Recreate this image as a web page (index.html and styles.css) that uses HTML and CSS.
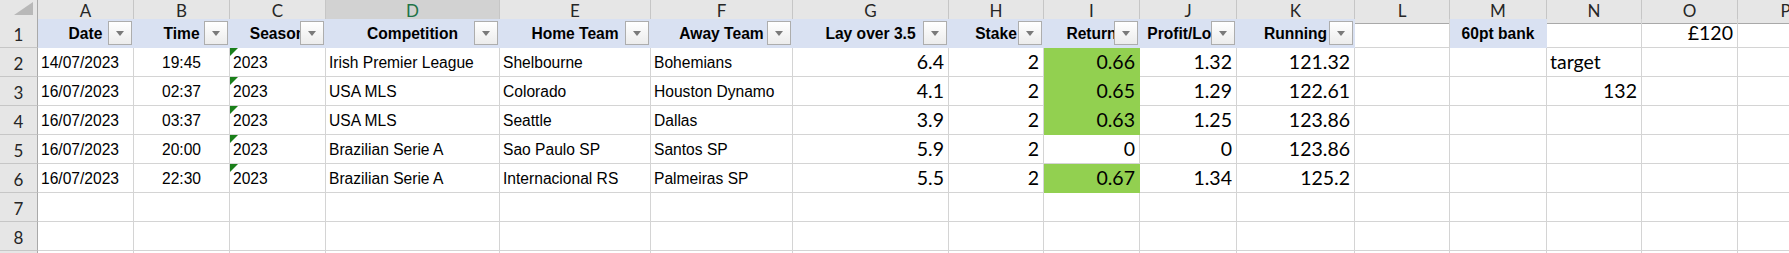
FILE: index.html
```html
<!DOCTYPE html>
<html lang="en">
<head>
    <meta charset="UTF-8">
    <meta name="viewport" content="width=device-width, initial-scale=1.0">
    <title>Lay over 3.5 tracker</title>
    <link rel="stylesheet" href="styles.css">
</head>
<body>
    <div class="sheet">
        <!-- column letters -->
        <div class="row col-heads">
            <div class="corner">
                <svg width="37" height="18" viewBox="0 0 37 18"><polygon points="14,15 33,15 33,2" fill="#b8b8b8"/></svg>
            </div>
            <div class="ch">A</div>
            <div class="ch">B</div>
            <div class="ch">C</div>
            <div class="ch active">D</div>
            <div class="ch">E</div>
            <div class="ch">F</div>
            <div class="ch">G</div>
            <div class="ch">H</div>
            <div class="ch">I</div>
            <div class="ch">J</div>
            <div class="ch">K</div>
            <div class="ch">L</div>
            <div class="ch">M</div>
            <div class="ch">N</div>
            <div class="ch">O</div>
            <div class="ch">P</div>
        </div>

        <!-- table header -->
        <div class="row">
            <div class="rh">1</div>
            <div class="c hd">Date<span class="filter"></span></div>
            <div class="c hd">Time<span class="filter"></span></div>
            <div class="c hd">Season<span class="filter"></span></div>
            <div class="c hd">Competition<span class="filter"></span></div>
            <div class="c hd">Home Team<span class="filter"></span></div>
            <div class="c hd">Away Team<span class="filter"></span></div>
            <div class="c hd">Lay over 3.5<span class="filter"></span></div>
            <div class="c hd">Stake<span class="filter"></span></div>
            <div class="c hd">Return<span class="filter"></span></div>
            <div class="c hd">Profit/Loss<span class="filter"></span></div>
            <div class="c hd">Running<span class="filter"></span></div>
            <div class="c"></div>
            <div class="c hd">60pt bank</div>
            <div class="c"></div>
            <div class="c num">£120</div>
            <div class="c"></div>
        </div>

        <div class="row">
            <div class="rh">2</div>
            <div class="c">14/07/2023</div>
            <div class="c mid">19:45</div>
            <div class="c flag">2023</div>
            <div class="c">Irish Premier League</div>
            <div class="c">Shelbourne</div>
            <div class="c">Bohemians</div>
            <div class="c num">6.4</div>
            <div class="c num">2</div>
            <div class="c num won">0.66</div>
            <div class="c num">1.32</div>
            <div class="c num">121.32</div>
            <div class="c"></div>
            <div class="c"></div>
            <div class="c note">target</div>
            <div class="c"></div>
            <div class="c"></div>
        </div>

        <div class="row">
            <div class="rh">3</div>
            <div class="c">16/07/2023</div>
            <div class="c mid">02:37</div>
            <div class="c flag">2023</div>
            <div class="c">USA MLS</div>
            <div class="c">Colorado</div>
            <div class="c">Houston Dynamo</div>
            <div class="c num">4.1</div>
            <div class="c num">2</div>
            <div class="c num won">0.65</div>
            <div class="c num">1.29</div>
            <div class="c num">122.61</div>
            <div class="c"></div>
            <div class="c"></div>
            <div class="c num">132</div>
            <div class="c"></div>
            <div class="c"></div>
        </div>

        <div class="row">
            <div class="rh">4</div>
            <div class="c">16/07/2023</div>
            <div class="c mid">03:37</div>
            <div class="c flag">2023</div>
            <div class="c">USA MLS</div>
            <div class="c">Seattle</div>
            <div class="c">Dallas</div>
            <div class="c num">3.9</div>
            <div class="c num">2</div>
            <div class="c num won">0.63</div>
            <div class="c num">1.25</div>
            <div class="c num">123.86</div>
            <div class="c"></div>
            <div class="c"></div>
            <div class="c"></div>
            <div class="c"></div>
            <div class="c"></div>
        </div>

        <div class="row">
            <div class="rh">5</div>
            <div class="c">16/07/2023</div>
            <div class="c mid">20:00</div>
            <div class="c flag">2023</div>
            <div class="c">Brazilian Serie A</div>
            <div class="c">Sao Paulo SP</div>
            <div class="c">Santos SP</div>
            <div class="c num">5.9</div>
            <div class="c num">2</div>
            <div class="c num">0</div>
            <div class="c num">0</div>
            <div class="c num">123.86</div>
            <div class="c"></div>
            <div class="c"></div>
            <div class="c"></div>
            <div class="c"></div>
            <div class="c"></div>
        </div>

        <div class="row">
            <div class="rh">6</div>
            <div class="c">16/07/2023</div>
            <div class="c mid">22:30</div>
            <div class="c flag">2023</div>
            <div class="c">Brazilian Serie A</div>
            <div class="c">Internacional RS</div>
            <div class="c">Palmeiras SP</div>
            <div class="c num">5.5</div>
            <div class="c num">2</div>
            <div class="c num won">0.67</div>
            <div class="c num">1.34</div>
            <div class="c num">125.2</div>
            <div class="c"></div>
            <div class="c"></div>
            <div class="c"></div>
            <div class="c"></div>
            <div class="c"></div>
        </div>

        <div class="row">
            <div class="rh">7</div>
            <div class="c"></div><div class="c"></div><div class="c"></div><div class="c"></div>
            <div class="c"></div><div class="c"></div><div class="c"></div><div class="c"></div>
            <div class="c"></div><div class="c"></div><div class="c"></div><div class="c"></div>
            <div class="c"></div><div class="c"></div><div class="c"></div><div class="c"></div>
        </div>

        <div class="row">
            <div class="rh">8</div>
            <div class="c"></div><div class="c"></div><div class="c"></div><div class="c"></div>
            <div class="c"></div><div class="c"></div><div class="c"></div><div class="c"></div>
            <div class="c"></div><div class="c"></div><div class="c"></div><div class="c"></div>
            <div class="c"></div><div class="c"></div><div class="c"></div><div class="c"></div>
        </div>

        <!-- only the top edge of row 9 is in view -->
        <div class="row">
            <div class="rh"></div>
            <div class="c"></div><div class="c"></div><div class="c"></div><div class="c"></div>
            <div class="c"></div><div class="c"></div><div class="c"></div><div class="c"></div>
            <div class="c"></div><div class="c"></div><div class="c"></div><div class="c"></div>
            <div class="c"></div><div class="c"></div><div class="c"></div><div class="c"></div>
        </div>
    </div>
</body>
</html>
```

FILE: styles.css
```css
body {
    margin: 0;
    background: #ffffff;
    overflow: hidden;
    font-family: 'Liberation Sans', Arial, sans-serif;
    color: #000;
}

.sheet {
    width: 1834px;
    height: 253px;
    overflow: hidden;
}

.row {
    display: grid;
    grid-template-columns: 38px 96px 96px 96px 174px 151px 142px 156px 95px 96px 97px 118px 95px 97px 95px 96px 96px;
    height: 29px;
}

/* column letters */
.col-heads {
    height: 19px;
}

.corner {
    background: #e6e6e6;
    border-right: 1px solid #a9a9a9;
    border-bottom: 1px solid #a9a9a9;
    box-sizing: border-box;
}

.corner svg {
    display: block;
}

.ch {
    display: flex;
    justify-content: center;
    align-items: center;
    padding-bottom: 2px;
    box-sizing: border-box;
    background: #e6e6e6;
    border-right: 1px solid #c6c6c6;
    border-bottom: 1px solid #a9a9a9;
    font-family: 'Lato', sans-serif;
    font-size: 17px;
    color: #262626;
}

.ch.active {
    background: #d2d2d2;
    color: #217346;
    border-bottom: 1px solid #217346;
    box-shadow: inset 0 -2px 0 #217346;
}

/* row numbers */
.rh {
    display: flex;
    justify-content: center;
    align-items: center;
    padding-top: 2px;
    box-sizing: border-box;
    background: #e6e6e6;
    border-right: 1px solid #a9a9a9;
    border-bottom: 1px solid #c6c6c6;
    font-family: 'Lato', sans-serif;
    font-size: 17px;
    color: #262626;
}

/* cells */
.c {
    position: relative;
    display: flex;
    align-items: flex-end;
    padding: 0 3px 4px 3px;
    box-sizing: border-box;
    border-right: 1px solid #d4d4d4;
    border-bottom: 1px solid #d4d4d4;
    font-size: 15.6px;
    line-height: 18px;
    white-space: nowrap;
    overflow: hidden;
}

.c.mid {
    justify-content: center;
}

.c.num,
.c.note {
    font-family: 'Lato', sans-serif;
    font-size: 19.5px;
    line-height: 24px;
    padding-bottom: 2px;
}

.c.num {
    justify-content: flex-end;
    padding-right: 4px;
}

.c.won {
    background: #92d050;
    border-color: #92d050;
}

/* number stored as text marker */
.c.flag::before {
    content: '';
    position: absolute;
    top: 0;
    left: 0;
    border-top: 8px solid #1a7f1a;
    border-right: 8px solid transparent;
}

/* table header */
.c.hd {
    justify-content: center;
    background: #d9e1f2;
    border-color: #d9e1f2;
    font-weight: bold;
}

.filter {
    position: absolute;
    top: 2px;
    right: 1px;
    width: 24px;
    height: 24px;
    box-sizing: border-box;
    border: 1px solid #adadad;
    background: linear-gradient(#ffffff, #ececec);
}

.filter::after {
    content: '';
    position: absolute;
    left: 7px;
    top: 9px;
    border-left: 4px solid transparent;
    border-right: 4px solid transparent;
    border-top: 5px solid #7a7a7a;
}
```
